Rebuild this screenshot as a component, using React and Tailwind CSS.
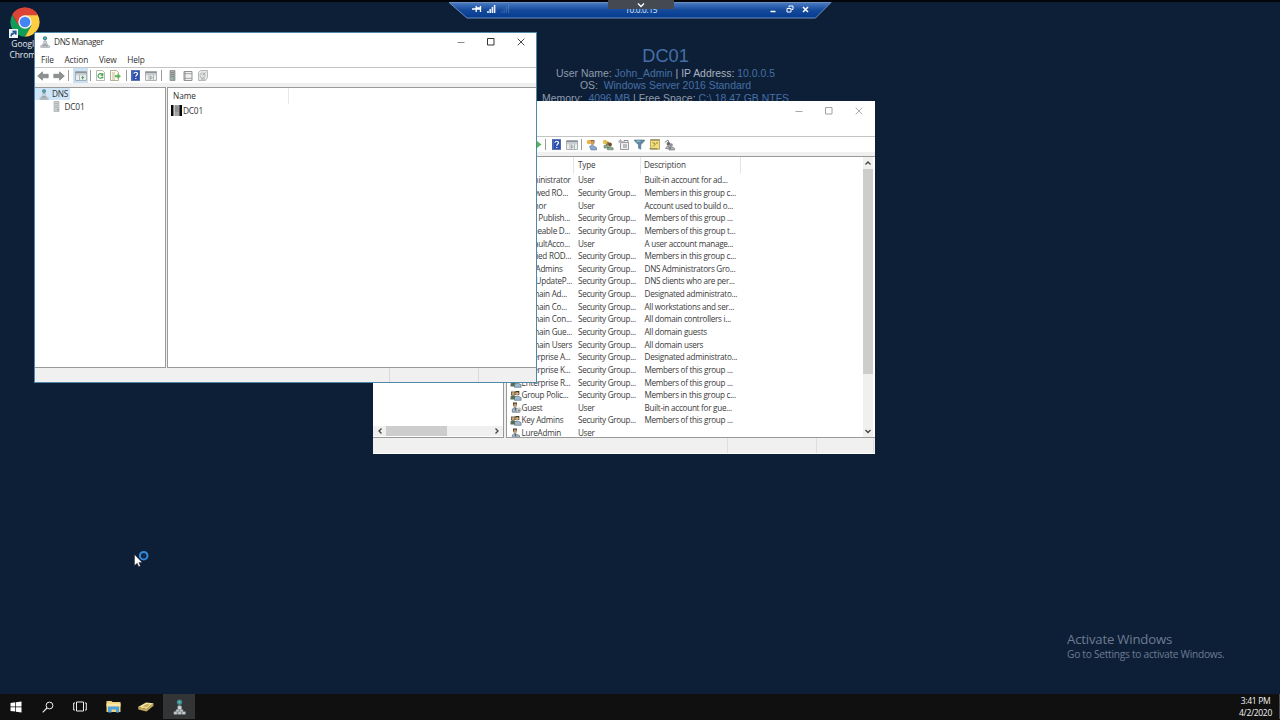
import React from 'react';

const SVG = ({ w = 12, h = 12, vb = '0 0 12 12', className = '', children }) => (
  <svg width={w} height={h} viewBox={vb} className={`block shrink-0 ${className}`} fill="none">{children}</svg>
);

const DnsIcon = ({ w = 10, h = 12 }) => (
  <SVG w={w} h={h} vb="0 0 10 12">
    <circle cx="5" cy="2.3" r="2.1" fill="#3f7f8e" />
    <path d="M3.6 2.2 5 .9l1.2 1.4L5 3.6z" fill="#57b5a0" />
    <path d="M5 4.4v1" stroke="#8a959b" />
    <path d="M3.7 5.2h2.8v3H3.7zM2.3 8.2h2.5v1.6H2.3zM5.2 8.2h2.5v1.6H5.2zM.7 9.7h2.6v1.8H.7zM3.8 9.7h2.6v1.8H3.8zM6.9 9.7h2.6v1.8H6.9z" fill="#d5dadd" stroke="#8b9398" strokeWidth=".5" />
  </SVG>
);
const ServerIcon = ({ w = 7, h = 11, dark = false }) => (
  <SVG w={w} h={h} vb="0 0 7 11">
    <path d="M1 .5h5v10H1z" fill={dark ? '#a3adab' : '#cdd0d2'} stroke={dark ? '#7b8482' : '#a4a9ac'} strokeWidth=".7" />
    <path d="M2 2.5h3M2 4.5h3M2 6.5h3" stroke={dark ? '#707a78' : '#a2a8ab'} strokeWidth=".7" />
    <path d="M4 8.7h1.5" stroke="#4fa56b" />
  </SVG>
);
const SelectedServerIcon = () => (
  <SVG w={11} h={11} vb="0 0 11 11">
    <path d="M0 0h11v11H0z" fill="#0a0a0a" />
    <path d="M2.500 0h6v11h-6z" fill="#a2a4a5" />
    <path d="M4 2h3.500M4 4h3.500M4 6h3.500" stroke="#6c6e70" strokeWidth=".7" />
    <path d="M3.200 0v11" stroke="#d4d4d4" />
  </SVG>
);
const ArrowIcon = ({ flip = false }) => (
  <SVG w={12} h={10} vb="0 0 12 10" className={flip ? 'rotate-180' : ''}>
    <path d="M.7 5 5.4.8v2.5h5.8v3.5H5.4v2.4z" fill="#8e9192" stroke="#7b7f80" strokeWidth=".7" />
  </SVG>
);
const PaneIcon = ({ tree = false }) => (
  <SVG w={12} h={10} vb="0 0 12 10">
    <path d="M.5.5h11v9H.5z" fill="#eceeee" stroke="#9ba1a5" strokeWidth=".8" />
    <path d="M.5 1.6h11" stroke="#8b9398" strokeWidth="1.6" />
    <path d="M1 3.7h10" stroke="#aeb4b8" strokeWidth=".7" />
    <path d={tree ? 'M4.5 4v5' : 'M8.500 4v5M4 4v5'} stroke="#9aa3a8" strokeWidth=".7" />
    <path d={tree ? 'M7.7 4.8v3.7M6.4 6.6h2.6' : 'M5.500 5l2 1.700-2 1.600z'} stroke={tree ? '#4b9a62' : '#73836f'} strokeWidth={tree ? '1' : '.6'} />
  </SVG>
);
const RefreshIcon = () => (
  <SVG w={9} h={11} vb="0 0 9 11">
    <path d="M.5.5h6l2 2v8h-8z" fill="#fff" stroke="#a5a6a0" strokeWidth=".8" />
    <path d="M6.5 6.8A2.3 2.3 0 1 1 6.3 4.7M6.8 3v2.2H4.6M6.8 8.3V6.5" stroke="#43a047" strokeWidth="1.1" />
  </SVG>
);
const ExportIcon = () => (
  <SVG w={11} h={11} vb="0 0 11 11">
    <path d="M.5.5h6l2 2v8h-8z" fill="#fffbe6" stroke="#a39b7e" strokeWidth=".8" />
    <path d="M2 3h3M2 5h3M2 7h3M2 9h3" stroke="#918b78" strokeWidth=".6" />
    <path d="M5 5.2h2.5V3.4L11 6.2 7.500 9V7.300H5z" fill="#58b55c" />
  </SVG>
);
const HelpIcon = () => (
  <SVG w={9} h={11} vb="0 0 9 11">
    <path d="M0 .5h8.700v10H0z" fill="#2c4fae" stroke="#26428f" strokeWidth=".5" />
    <path d="M1 1v9" stroke="#6f8cd6" strokeWidth=".8" />
    <path d="M3 3.800C3 1.700 6.600 1.800 6.500 3.900 6.400 5.200 4.800 5 4.800 6.700M4.800 8v1.100" stroke="#fff" strokeWidth="1.200" />
  </SVG>
);
const BoxIcon = () => (
  <SVG w={10} h={10} vb="0 0 10 10">
    <path d="M1 .5h8v9H1z" fill="#f1f1f1" stroke="#858889" strokeWidth=".9" />
    <path d="M1 2.700h8M1 7.300h8" stroke="#8e9293" strokeWidth=".8" />
    <path d="M2 .5v9" stroke="#858889" strokeWidth=".8" />
  </SVG>
);
const GaugeIcon = () => (
  <SVG w={10} h={11} vb="0 0 10 11">
    <path d="M2.500.5h7v7l-2 3h-7v-8z" fill="#e6e8e8" stroke="#a5a9aa" strokeWidth=".8" />
    <circle cx="4.500" cy="5.500" r="2.500" stroke="#a5a9aa" strokeWidth=".8" />
    <path d="m4.500 5.500 3-3M3 9h4" stroke="#8f9495" strokeWidth=".8" />
  </SVG>
);
const GroupIcon = () => (
  <SVG w={12} h={11} vb="0 0 12 11">
    <path d="M1 1.500h4v4H1z" fill="#6b5a35" />
    <circle cx="3.200" cy="3.600" r="1.500" fill="#c8a677" />
    <path d="M.5 9.500V6.500l2.500-1.200L6 6.500v3z" fill="#566f52" />
    <path d="M5.300 1h4v4h-4z" fill="#40351f" />
    <circle cx="7.200" cy="3.500" r="1.600" fill="#cfab80" />
    <path d="M4.500 10.300V7.300l2.600-1.500 4 1.800v2.700z" fill="#9db8cf" stroke="#4f6474" strokeWidth=".6" />
  </SVG>
);
const UserIcon = ({ off = false }) => (
  <SVG w={12} h={11} vb="0 0 12 11">
    <path d="M3 .5h4v3.700H3z" fill="#4b3d2b" />
    <circle cx="5.200" cy="3.300" r="1.700" fill="#c79a70" />
    <path d="M2.300 10.300V7l2.500-1.600 4.700 2.200v2.700z" fill="#9fb2c4" stroke="#53616f" strokeWidth=".6" />
    <path d="m5 5.500.8 3" stroke="#31393f" strokeWidth=".8" />
    {off && <><circle cx="9" cy="8" r="2.200" fill="#eee" stroke="#8d9499" strokeWidth=".5" /><path d="M9 6.700v2.600M8 8.200l1 1.100 1-1.100" stroke="#333" strokeWidth=".6" /></>}
  </SVG>
);
const NewUserIcon = () => (
  <SVG w={12} h={12}>
    <path d="M4 1h4.500v3H4z" fill="#8a6a45" />
    <circle cx="6.500" cy="4" r="2" fill="#c89a66" />
    <path d="M3.500 7.500 6 6l4.500 2.500V11H5z" fill="#84a8cf" stroke="#5c7694" strokeWidth=".6" />
    <circle cx="3" cy="3" r="2.200" fill="#eeb04a" />
  </SVG>
);
const NewGroupIcon = () => (
  <SVG w={12} h={12}>
    <circle cx="5.500" cy="4.500" r="2" fill="#9d7a45" />
    <circle cx="8" cy="5.500" r="1.900" fill="#67512f" />
    <path d="M2 9V6.500l3-.5 2 3zM5.500 10.800V8.500l2.500-1 3.200 1.600v1.700z" fill="#8fae8e" stroke="#5a6b6b" strokeWidth=".6" />
    <circle cx="3" cy="3" r="2.200" fill="#e3c24c" />
  </SVG>
);
const NewOuIcon = () => (
  <SVG w={12} h={12}>
    <path d="M2.500 3.500h8v7h-8z" fill="#f0f0f0" stroke="#8b8f91" strokeWidth=".9" />
    <path d="M6 3V1.500h4V3M5 6h4M5 8h4" stroke="#777c7f" strokeWidth=".9" />
    <path d="M2.500 0v5M0 2.500h5M.800.800l3.400 3.400M4.200.800.800 4.200" stroke="#a9abac" strokeWidth=".8" />
  </SVG>
);
const FunnelIcon = () => (
  <SVG w={11} h={11} vb="0 0 11 11">
    <path d="M.5 1h10v1L6.800 5.700v4.500l-2.300-1V5.700L.5 2z" fill="#5f88a3" stroke="#4c7088" strokeWidth=".6" />
    <path d="M2.500 2.200h4" stroke="#b9d7e6" strokeWidth=".8" />
  </SVG>
);
const ScriptIcon = () => (
  <SVG w={11} h={11} vb="0 0 11 11">
    <path d="M1.500.5h9v9.800h-9z" fill="#f4dd78" stroke="#a79a5a" strokeWidth=".8" />
    <path d="M1.500 1.200h9M.5 9.700h8" stroke="#7c7b69" strokeWidth=".9" />
    <path d="M3.500 3.500 6.500 5 4 7.500M7 4h2" stroke="#8d7c36" strokeWidth=".9" />
  </SVG>
);
const FindIcon = () => (
  <SVG w={11} h={12} vb="0 0 11 12">
    <path d="m.8 3.500 3-2.500 1 2" stroke="#777" strokeWidth="1" />
    <circle cx="4.500" cy="4.800" r="1.900" fill="#65676a" />
    <circle cx="7.200" cy="6" r="1.700" fill="#8e8f90" />
    <path d="M1.500 9.500 3.500 7l3 1v2zM5 11V8.700l2.500-1 3 1.600V11z" fill="#aeb4b8" stroke="#63686b" strokeWidth=".6" />
  </SVG>
);

const Sep = () => <div className="h-[11px] w-px shrink-0 bg-[#9b9b9b]" />;

const CaptionButtons = ({ faded = false }) => {
  const c = faded ? '#a0a0a0' : '#333333';
  return (
    <div className={`flex h-[18px] items-center gap-[22px] ${faded ? 'pr-[12px]' : 'pr-[11px]'}`}>
      <SVG w={8} h={8} vb="0 0 8 8"><path d="M.5 4.500h7" stroke={faded ? '#a8a8a8' : '#8a8a8a'} /></SVG>
      <SVG w={8} h={8} vb="0 0 8 8"><path d="M.5.5h6.500v6.500H.5z" stroke={c} /></SVG>
      <SVG w={8} h={8} vb="0 0 8 8"><path d="m.7.7 6.600 6.600M7.300.7.7 7.300" stroke={c} strokeWidth=".9" /></SVG>
    </div>
  );
};

const G = 'Security Group...';
const rows = [
  ['Administrator', 'User', 'Built-in account for ad...', 'u'],
  ['Allowed RO...', G, 'Members in this group c...', 'g'],
  ['Author', 'User', 'Account used to build o...', 'u'],
  ['Cert Publish...', G, 'Members of this group ...', 'g'],
  ['Cloneable D...', G, 'Members of this group t...', 'g'],
  ['DefaultAcco...', 'User', 'A user account manage...', 'u'],
  ['Denied ROD...', G, 'Members in this group c...', 'g'],
  ['DnsAdmins', G, 'DNS Administrators Gro...', 'g'],
  ['DnsUpdateP...', G, 'DNS clients who are per...', 'g'],
  ['Domain Ad...', G, 'Designated administrato...', 'g'],
  ['Domain Co...', G, 'All workstations and ser...', 'g'],
  ['Domain Con...', G, 'All domain controllers i...', 'g'],
  ['Domain Gue...', G, 'All domain guests', 'g'],
  ['Domain Users', G, 'All domain users', 'g'],
  ['Enterprise A...', G, 'Designated administrato...', 'g'],
  ['Enterprise K...', G, 'Members of this group ...', 'g'],
  ['Enterprise R...', G, 'Members of this group ...', 'g'],
  ['Group Polic...', G, 'Members in this group c...', 'g'],
  ['Guest', 'User', 'Built-in account for gue...', 'd'],
  ['Key Admins', G, 'Members of this group ...', 'g'],
  ['LureAdmin', 'User', '', 'u'],
];

const Chevron = ({ d }) => <SVG w={8} h={8} vb="0 0 8 8"><path d={d} stroke="#444" strokeWidth="1.300" /></SVG>;

const DirectoryWindow = () => (
  <section className="absolute left-[373px] top-[101px] flex h-[353px] w-[502px] flex-col overflow-hidden bg-white text-[#3a3a3a]">
    <div className="flex h-[35px] shrink-0 items-start justify-end pt-px"><CaptionButtons faded /></div>
    <div className="flex h-[16px] shrink-0 items-center border-t border-[#c4c4c4] pl-[158px]">
      <SVG w={11} h={11} vb="0 0 11 11"><path d="M3 4.200h3V2l4.500 3.500L6 9V6.800H3z" fill="#58b55c" /></SVG>
      <div className="ml-[3px]"><Sep /></div>
      <div className="ml-[6px] flex items-center gap-[5px]"><HelpIcon /><PaneIcon /></div>
      <div className="ml-[3px]"><Sep /></div>
      <div className="ml-[4px] flex items-center gap-[4px]">
        <NewUserIcon /><NewGroupIcon /><NewOuIcon /><FunnelIcon /><ScriptIcon /><FindIcon />
      </div>
    </div>
    <div className="h-[4px] shrink-0 bg-[#f0f0f0]" />
    <div className="flex h-[282px] shrink-0 bg-[#f0f0f0]">
      <div className="flex w-[131px] flex-col justify-end border-y border-r border-[#9a9a9a] bg-white pb-px">
        <div className="flex h-[10px] items-center bg-[#f0f0f0] px-[3px]">
          <Chevron d="M5.500 1.500 3 4l2.500 2.500" />
          <div className="ml-[2px] h-[10px] w-[61px] bg-[#cdcdcd]" />
          <div className="ml-auto"><Chevron d="m3.500 1.500 2.500 2.500-2.500 2.500" /></div>
        </div>
      </div>
      <div className="ml-[2px] flex min-w-0 flex-1 overflow-hidden border-y border-l border-[#9a9a9a] bg-white">
        <div className="flex min-w-0 flex-1 flex-col whitespace-nowrap text-[8.150px] tracking-[-0.150px]">
          <div className="flex h-[17px] shrink-0 items-center">
            <div className="h-full w-[67px] border-r border-[#e5e5e5]" />
            <div className="flex h-full w-[67px] items-center border-r border-[#e5e5e5] pl-[4px]">Type</div>
            <div className="flex h-full w-[100px] items-center border-r border-[#e5e5e5] pl-[3px]">Description</div>
          </div>
          {rows.map((r, i) => (
            <div key={i} className="flex h-[12.650px] shrink-0 items-center leading-[12px]">
              <div className="flex w-[71px] items-center pl-[2.500px]">
                {r[3] === 'g' ? <GroupIcon /> : <UserIcon off={r[3] === 'd'} />}
                <span className="tracking-[-0.250px]">{r[0]}</span>
              </div>
              <div className="w-[66.500px] tracking-[-0.300px]">{r[1]}</div>
              <div className="tracking-[-0.270px]">{r[2]}</div>
            </div>
          ))}
        </div>
        <div className="mr-[2px] flex w-[10px] shrink-0 flex-col items-center bg-[#f0f0f0]">
          <div className="flex h-[12px] items-center"><Chevron d="m1.500 5.500 2.500-2.500 2.500 2.500" /></div>
          <div className="h-[205px] w-full bg-[#cdcdcd]" />
          <div className="mt-auto flex h-[12px] items-center"><Chevron d="m1.500 3 2.500 2.500L6.500 3" /></div>
        </div>
      </div>
    </div>
    <div className="flex h-[15px] shrink-0 bg-[#f0f0f0]">
      <div className="w-[355px] border-r border-[#dedede]" />
      <div className="w-[89px] border-r border-[#dedede]" />
      <div className="w-[57px] border-r border-[#dedede]" />
    </div>
  </section>
);

const DnsWindow = () => (
  <section className="absolute left-[34px] top-[32px] flex h-[351px] w-[503px] flex-col overflow-hidden border border-[#4f88a9] bg-white text-[#303030]">
    <div className="flex h-[18px] shrink-0 items-center pl-[5px]">
      <DnsIcon />
      <span className="ml-[4px] pt-px text-[8.300px] tracking-[-0.350px]">DNS Manager</span>
      <div className="ml-auto"><CaptionButtons /></div>
    </div>
    <div className="flex h-[16px] shrink-0 items-center gap-[10.700px] pl-[6px] pt-[2px] text-[8.300px] tracking-[-0.100px]">
      <span>File</span><span>Action</span><span>View</span><span>Help</span>
    </div>
    <div className="flex h-[16px] shrink-0 items-center border-t border-[#c4c4c4] pl-[2px]">
      <ArrowIcon /><div className="ml-[4px]"><ArrowIcon flip /></div>
      <div className="ml-[3px]"><Sep /></div>
      <div className="ml-[4px] flex h-[15px] w-[15px] items-center justify-center bg-[#c9e2f5]"><PaneIcon tree /></div>
      <div className="ml-[2px]"><Sep /></div>
      <div className="ml-[5px] flex items-center gap-[5px]"><RefreshIcon /><ExportIcon /></div>
      <div className="ml-[5px]"><Sep /></div>
      <div className="ml-[4px] flex items-center gap-[5px]"><HelpIcon /><PaneIcon /></div>
      <div className="ml-[4px]"><Sep /></div>
      <div className="ml-[7px] flex items-center gap-[5px]"><ServerIcon dark /><span className="ml-[2px]"><BoxIcon /></span><GaugeIcon /></div>
    </div>
    <div className="h-[4px] shrink-0 bg-[#f0f0f0]" />
    <div className="flex h-[281px] shrink-0 bg-[#f0f0f0] text-[8.300px] tracking-[-0.200px]">
      <div className="w-[131px] border-y border-r border-[#9a9a9a] bg-white">
        <div className="flex h-[12px] w-[35px] items-center bg-[#cfe6f8] pl-[4px] leading-[12px]">
          <DnsIcon w={10} h={11} /><span className="ml-[3px]">DNS</span>
        </div>
        <div className="flex h-[13px] items-center pl-[18px] leading-[13px]">
          <ServerIcon /><span className="ml-[4.500px]">DC01</span>
        </div>
      </div>
      <div className="ml-[1px] flex-1 border-y border-l border-[#9a9a9a] bg-white">
        <div className="flex h-[16px] w-[121px] items-center border-r border-[#e8e8e8] pl-[5px] pt-px tracking-[-0.100px]">Name</div>
        <div className="flex h-[13px] items-center pl-[3px] leading-[13px]">
          <SelectedServerIcon /><span className="ml-[1px]">DC01</span>
        </div>
      </div>
    </div>
    <div className="flex h-[15px] shrink-0 bg-[#f0f0f0]">
      <div className="w-[355px] border-r border-[#d9d9d9]" />
      <div className="w-[89px] border-r border-[#d9d9d9]" />
    </div>
  </section>
);

const ConnectionBar = () => (
  <div className="absolute left-[448px] top-[2px] h-[17px] w-[384px]">
    <svg width="384" height="17" viewBox="0 0 384 17" className="absolute inset-0 block">
      <defs><linearGradient id="bar" x1="0" y1="0" x2="0" y2="1"><stop offset="0" stopColor="#4a7cc4" /><stop offset=".5" stopColor="#14499a" /><stop offset="1" stopColor="#053c91" /></linearGradient></defs>
      <path d="M1 .5h382l-15.500 15.500H19z" fill="url(#bar)" stroke="#6d8fbd" />
    </svg>
    <div className="relative flex h-[14px] items-center pl-[24px] pr-[23px]">
      <SVG w={10} h={8} vb="0 0 10 8"><path d="M0 4h4M4.200 1v6M4.200 4H9M8.500 1v6M4.200 3h4" stroke="#fff" strokeWidth="1.300" /></SVG>
      <SVG w={9} h={8} vb="0 0 9 8" className="ml-[5px]"><path d="M1 6v2M3.200 4v4M5.400 2v6M7.600 0v8" stroke="#e5edf8" strokeWidth="1.600" /></SVG>
      <SVG w={9} h={8} vb="0 0 9 8" className="ml-[5px] opacity-20"><path d="M1 6v2M3.200 4v4M5.400 2v6M7.600 0v8" stroke="#e5edf8" /></SVG>
      <span className="ml-[115px] pt-[2px] text-[8.300px] leading-none tracking-[-0.300px] text-[#dbe6f5]">10.0.0.15</span>
      <SVG w={6} h={8} vb="0 0 6 8" className="ml-auto"><path d="M.5 6.500h5" stroke="#fff" strokeWidth="1.500" /></SVG>
      <SVG w={8} h={8} vb="0 0 8 8" className="ml-[10px]"><path d="M3 2.500V1h4v3.500H5.500M1 3.500h4V7H1z" stroke="#fff" /></SVG>
      <SVG w={7} h={7} vb="0 0 7 7" className="ml-[8px]"><path d="m1 1 5 5M6 1 1 6" stroke="#fff" strokeWidth="1.500" /></SVG>
    </div>
    <div className="absolute left-[160px] top-[-2px] flex h-[9px] w-[66px] items-center justify-center bg-[#454a52]">
      <SVG w={8} h={6} vb="0 0 8 6"><path d="m1 1.500 3 3 3-3" stroke="#fff" strokeWidth="1.400" /></SVG>
    </div>
  </div>
);

export default function App() {
  return (
    <main className="relative flex h-[720px] w-[1280px] flex-col overflow-hidden bg-[#0d1f36] font-['Open_Sans','Noto_Sans',sans-serif]">
      <div className="h-[2px] w-full bg-[#02060c]" />

      <div className="absolute left-[2px] top-[7px] flex w-[46px] flex-col items-center text-center text-[8.500px] leading-[10.500px] tracking-[-0.100px] text-[#e4e8ee]">
        <svg width="30" height="30" viewBox="0 0 30 30" className="block">
          <path d="M15 15 2.300 7.700A14.700 14.700 0 0 1 27.700 7.700z" fill="#db4437" />
          <path d="M2.300 7.700A14.700 14.700 0 0 0 15 29.700L21.400 18.600 15 15 8.600 18.600z" fill="#0f9d58" />
          <path d="M27.700 7.700A14.700 14.700 0 0 1 15 29.700L21.400 18.600 15 8.300z" fill="#ffcd40" />
          <path d="M2.300 7.700A14.700 14.700 0 0 1 27.700 7.700L27.900 8.300H15L8.600 18.600z" fill="#db4437" />
          <circle cx="15" cy="15" r="6.700" fill="#f1f1f1" />
          <circle cx="15" cy="15" r="5.300" fill="#4285f4" />
        </svg>
        <svg width="9" height="9" viewBox="0 0 9 9" className="absolute left-[7px] top-[22px] block">
          <path d="M0 0h9v9H0z" fill="#f2f6fa" /><path d="M2 7.500C2 5 3 4 5 4M3.500 2.200H7V5.700M7 2.200 3.500 5.500" stroke="#215ca0" strokeWidth="1.300" />
        </svg>
        <span className="mt-[2px]">Google</span><span>Chrome</span>
      </div>

      <ConnectionBar />

      <div className="absolute left-[465.500px] top-[46px] flex w-[400px] flex-col items-center whitespace-pre font-['Liberation_Sans',Arial,sans-serif] text-[10.450px] leading-[12.600px] text-[#456fa8]">
        <div className="h-[21.500px] text-[18.200px] leading-[20px]">DC01</div>
        <div><span className="text-[#8f9bad]">User Name: </span>John_Admin<span className="text-[#a9b2c0]"> | IP Address: </span>10.0.0.5</div>
        <div><span className="text-[#8f9bad]">OS:  </span>Windows Server 2016 Standard</div>
        <div><span className="text-[#8f9bad]">Memory:  </span>4096 MB<span className="text-[#8f9bad]"> | Free Space: </span>C:\ 18.47 GB NTFS</div>
      </div>

      <DirectoryWindow />
      <DnsWindow />

      <svg width="18" height="20" viewBox="0 0 18 20" className="absolute left-[133px] top-[549px] block">
        <circle cx="10.700" cy="6.700" r="3.800" stroke="#3588d8" strokeWidth="2" fill="#102a4c" />
        <path d="M1.500 5.500v11l2.700-2.300 1.500 3.600 1.700-.8-1.500-3.400h3.300z" fill="#fff" stroke="#111" strokeWidth=".4" />
      </svg>

      <div className="absolute left-[1067px] top-[631px] flex flex-col whitespace-nowrap text-[#6c7b93]">
        <span className="text-[13.200px] leading-[17px] tracking-[-0.200px]">Activate Windows</span>
        <span className="text-[10.200px] leading-[13px] tracking-[-0.270px]">Go to Settings to activate Windows.</span>
      </div>

      <footer className="mt-auto flex h-[26px] items-center bg-[#101010] pb-px">
        <div className="flex items-center pl-[10px]">
          <SVG w={12} h={12}><path d="M.5 2 5.300 1.300v4.300H.5zM6 1.200 11.500.5v5.100H6zM.5 6.300h4.800v4.300L.5 10zM6 6.300h5.500v5.200L6 10.700z" fill="#fff" /></SVG>
          <SVG w={12} h={12} className="ml-[20px]"><circle cx="7.500" cy="4.500" r="3.400" stroke="#eee" /><path d="m5 7-4.300 4.300" stroke="#eee" strokeWidth="1.100" /></SVG>
          <SVG w={14} h={11} vb="0 0 14 11" className="ml-[19px]"><path d="M3.500 1h7v9h-7zM2 2H.700v7H2M12 2h1.300v7H12" stroke="#eee" /></SVG>
          <SVG w={15} h={13} vb="0 0 15 13" className="ml-[19px]"><path d="M.5 1h5l1 1h8v10H.5z" fill="#f3d17a" /><path d="M.5 3.500h14v3H.5z" fill="#fbe6a3" /><path d="M2 12.500V6.500h11v6h-3V9.500H5.500v3z" fill="#4aa3df" /></SVG>
          <SVG w={16} h={12} vb="0 0 16 12" className="ml-[17px]"><path d="M0 6 8 1.500l7.500.8L8.500 8z" fill="#f0e2a0" /><path d="M0 6 8.500 8v2.500L.5 8.500zM8.500 8l7-5.700v2.500l-7 5.700z" fill="#c4a957" /><path d="m4.500 5.500 4.500-2.500 3 .5L8.500 6.200z" fill="#c5ab5b" /></SVG>
        </div>
        <div className="ml-[9px] flex h-[25px] w-[32px] items-center justify-center bg-[#333435]"><DnsIcon w={13} h={16} /></div>
        <div className="ml-auto flex flex-col items-center pr-[7px] text-[8.500px] leading-[12px] tracking-[-0.300px] text-[#f0f0f0]">
          <span>3:41 PM</span><span>4/2/2020</span>
        </div>
        <div className="h-[25px] w-px bg-[#4a4a4a]" />
      </footer>
    </main>
  );
}
